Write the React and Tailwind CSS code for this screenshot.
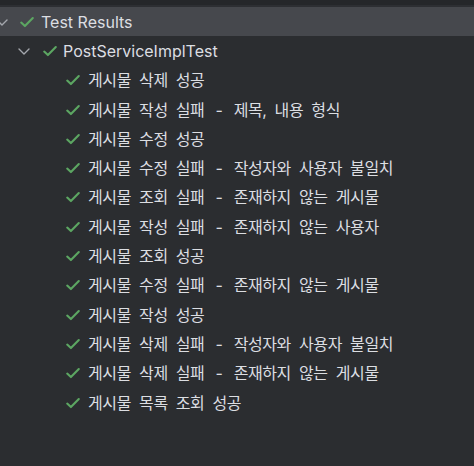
import React from "react";

const Chevron = ({ className }) => (
  <svg width="12" height="12" viewBox="0 0 12 12" className={className} fill="none">
    <path d="M1 4 L6 9 L11 4" stroke="#a4a7ad" strokeWidth="1.4" strokeLinecap="round" strokeLinejoin="round" />
  </svg>
);

const Check = ({ className }) => (
  <svg width="16" height="16" viewBox="0 0 16 16" className={className} fill="none">
    <path d="M2.2 8.6 L5.9 12.1 L13.8 4" stroke="#5ca662" strokeWidth="2.1" strokeLinecap="round" strokeLinejoin="round" />
  </svg>
);

const items = [
  "게시물 삭제 성공",
  "게시물 작성 실패 - 제목, 내용 형식",
  "게시물 수정 성공",
  "게시물 수정 실패 - 작성자와 사용자 불일치",
  "게시물 조회 실패 - 존재하지 않는 게시물",
  "게시물 작성 실패 - 존재하지 않는 사용자",
  "게시물 조회 성공",
  "게시물 수정 실패 - 존재하지 않는 게시물",
  "게시물 작성 성공",
  "게시물 삭제 실패 - 작성자와 사용자 불일치",
  "게시물 삭제 실패 - 존재하지 않는 게시물",
  "게시물 목록 조회 성공",
];

const Label = ({ text }) => {
  const parts = text.split(" - ");
  if (parts.length === 1) return <>{text}</>;
  return (
    <>
      {parts[0]} <span className="mx-[3px]">-</span> {parts[1]}
    </>
  );
};

export default function App() {
  return (
    <div
      className="w-[474px] h-[466px] overflow-hidden bg-[#2b2d30] text-[#dcdee2] text-[16px] leading-none"
      style={{ fontFamily: 'Inter, "Noto Sans CJK KR", sans-serif' }}
    >
      <div className="h-[5px] bg-[#25272a]" />
      <div className="h-[2px] bg-[#2d2f33]" />
      <div className="flex items-center h-[29.3px] bg-[#46484d]">
        <Chevron className="ml-[-4px] mr-[11px] shrink-0" />
        <Check className="shrink-0" />
        <span className="ml-[6px] whitespace-nowrap">Test Results</span>
      </div>
      <div className="flex items-center h-[29.3px] pl-[18px]">
        <Chevron className="mr-[12px] shrink-0" />
        <Check className="shrink-0" />
        <span className="ml-[5px] whitespace-nowrap">PostServiceImplTest</span>
      </div>
      {items.map((t, i) => (
        <div key={i} className="flex items-center h-[29.3px] pl-[65px]">
          <Check className="shrink-0" />
          <span className="ml-[7px] whitespace-nowrap tracking-[-0.4px] [word-spacing:4px]">
            <Label text={t} />
          </span>
        </div>
      ))}
    </div>
  );
}
